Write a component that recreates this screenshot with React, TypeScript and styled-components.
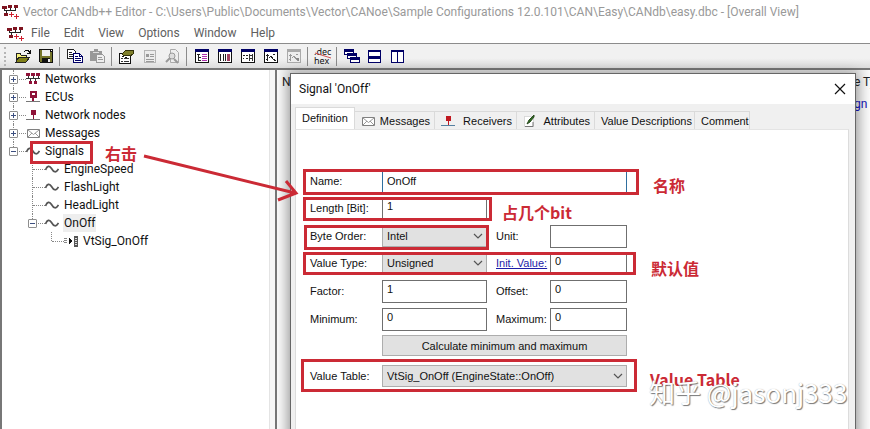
import React from "react";
import styled, { createGlobalStyle, css } from "styled-components";

const UI = `Roboto, "Noto Sans", sans-serif`;
const DLG = `"Liberation Sans", Arial, sans-serif`;
const CJK = `"Noto Sans CJK SC", sans-serif`;
const RED = "#cb2a35";

const GlobalStyle = createGlobalStyle`
  * { box-sizing: border-box; }
  html, body { margin: 0; padding: 0; }
  body { background: #fff; color: #111; font: 12px/18px ${UI}; overflow: hidden; }
  button, input, select { font: inherit; color: inherit; margin: 0; }
`;

const Shell = styled.div`
  position: relative;
  min-height: 100vh;
  display: flex;
  flex-direction: column;
  overflow: hidden;
`;

const TitleBar = styled.header`
  display: flex;
  align-items: center;
  gap: 4px;
  height: 23px;
  padding-left: 2px;
  color: #999;
  white-space: nowrap;
  flex: none;
`;

const MenuBar = styled.nav`
  display: flex;
  align-items: center;
  height: 20px;
  padding-left: 7px;
  color: #606060;
  flex: none;
`;

const MenuItem = styled.button`
  border: 0;
  background: none;
  padding: 0 7px;
`;

const Toolbar = styled.div`
  display: flex;
  align-items: center;
  height: 27px;
  padding-left: 11px;
  border-top: 1px solid #8c8c8c;
  border-bottom: 2px solid #777;
  background: linear-gradient(#f1f1f1 60%, #dcdcdc);
  flex: none;
  position: relative;
`;

const Grip = styled.i`
  position: absolute;
  left: 4px;
  top: 3px;
  bottom: 2px;
  border-left: 2px dotted #b5b5b5;
`;

const ToolButton = styled.button`
  width: 23px;
  height: 22px;
  padding: 0;
  border: 0;
  background: none;
  display: grid;
  place-items: center;
`;

const Separator = styled.i`
  width: 4px;
  height: 19px;
  border-left: 1px solid #8b8b8b;
  margin-left: 2px;
`;

const Workspace = styled.main`
  flex: 1;
  display: flex;
`;

const TreePane = styled.aside`
  width: 270px;
  border-left: 2px solid #777;
  border-right: 1px solid #e4e4e4;
  background: #fff;
`;

const Splitter = styled.div`
  width: 5px;
  background: #f7f7f7;
`;

const ListPane = styled.section`
  flex: 1;
  border-left: 2px solid #777;
  background: linear-gradient(90deg, #fafafa, #dedede 14px, #dedede calc(100% - 14px), #fafafa);
  display: flex;
  justify-content: space-between;
  align-items: flex-start;
  padding: 3px 0 0 5px;
  white-space: nowrap;
  overflow: hidden;
`;

const LastColumn = styled.div`
  width: 16px;
  display: flex;
  flex-direction: column;
  gap: 4px;
`;

const ColumnText = styled.span<{ $blue?: boolean }>`
  color: ${(p) => (p.$blue ? "#1414b4" : "#222")};
`;

const Tree = styled.ul`
  list-style: none;
  margin: 0;
  padding: 0 0 0 7px;
  position: relative;
`;

const SubTree = styled(Tree)`
  padding-left: 19px;
`;

const TreeRow = styled.div`
  display: flex;
  align-items: center;
  height: 18px;
`;

const Branch = styled.span<{ $last?: boolean }>`
  position: relative;
  width: 17px;
  height: 18px;
  flex: none;
  &::before {
    content: "";
    position: absolute;
    left: 4px;
    top: 0;
    height: ${(p) => (p.$last ? "9px" : "18px")};
    border-left: 1px dotted #888;
  }
  &::after {
    content: "";
    position: absolute;
    left: 5px;
    right: 0;
    top: 9px;
    border-top: 1px dotted #888;
  }
`;

const Expander = styled.button`
  position: absolute;
  z-index: 1;
  left: 0;
  top: 5px;
  width: 9px;
  height: 9px;
  padding: 0;
  border: 1px solid #8e8e8e;
  border-radius: 1px;
  background: #fff;
  svg { display: block; }
`;

const NodeLabel = styled.span<{ $selected?: boolean }>`
  padding: 0 1px;
  margin-left: 4px;
  background: ${(p) => (p.$selected ? "#eee" : "none")};
`;

const Dialog = styled.section`
  position: absolute;
  left: 290px;
  right: 14px;
  top: 73px;
  bottom: -12px;
  border: 1px solid #666;
  background: #f0f0f0;
  box-shadow: 0 1px 12px rgba(0, 0, 0, 0.35);
  display: flex;
  flex-direction: column;
  font-family: ${DLG};
  font-size: 11px;
  line-height: 14px;
  color: #111;
`;

const DialogTitle = styled.header`
  height: 30px;
  display: flex;
  align-items: center;
  justify-content: space-between;
  padding: 0 9px 0 8px;
  background: #fff;
  font: 12px/18px ${UI};
`;

const CloseButton = styled.button`
  width: 12px;
  height: 12px;
  padding: 0;
  border: 0;
  background: none;
  svg { display: block; }
`;

const Tabs = styled.div`
  display: flex;
  align-items: flex-end;
  height: 25px;
  padding-left: 4px;
`;

const Tab = styled.button<{ $active?: boolean; $width: number }>`
  width: ${(p) => p.$width}px;
  height: 18px;
  display: flex;
  align-items: center;
  justify-content: space-between;
  padding: 0 4px 0 6px;
  border: 1px solid #dadada;
  border-left: 0;
  border-bottom: 0;
  background: #f0f0f0;
  white-space: nowrap;
  ${(p) =>
    p.$active &&
    css`
      height: 22px;
      padding-bottom: 2px;
      background: #fff;
      border-left: 1px solid #dadada;
    `}
`;

const Page = styled.div`
  flex: 1;
  margin: 0 6px 0 4px;
  padding: 40px 15px 0 14px;
  background: #fff;
  border: 1px solid #dcdcdc;
  border-top-color: #e4e4e4;
`;

const Form = styled.form`
  display: grid;
  grid-template-columns: 72px 105px 63px 77px;
  grid-template-rows: 27px 28px 27px 28px 28px 27px 30px 21px;
  align-items: start;
`;

const Label = styled.label<{ $second?: boolean }>`
  line-height: 23px;
  white-space: nowrap;
  ${(p) => p.$second && "padding-left: 9px;"}
`;

const InitLink = styled.a`
  line-height: 23px;
  padding-left: 9px;
  color: #1c1ca8;
  white-space: nowrap;
`;

const Field = styled.input<{ $wide?: boolean; $blue?: boolean }>`
  width: 100%;
  height: 23px;
  padding: 0 4px 5px;
  border: 1px solid ${(p) => (p.$blue ? "#2f6f9f" : "#6f6f6f")};
  background: #fff;
  outline: 0;
  ${(p) => p.$wide && "grid-column: 2 / 5; padding-bottom: 1px;"}
`;

const SelectBox = styled.div<{ $wide?: boolean }>`
  position: relative;
  ${(p) => p.$wide && "grid-column: 2 / 5;"}
  svg { position: absolute; right: 4px; top: 8px; pointer-events: none; }
`;

const Select = styled.select`
  appearance: none;
  display: block;
  width: 100%;
  height: 22px;
  padding: 0 4px;
  border: 1px solid #adadad;
  border-radius: 0;
  background: #e1e1e1;
`;

const WideButton = styled.button`
  grid-column: 2 / 5;
  height: 21px;
  padding: 0;
  border: 1px solid #adadad;
  background: #e1e1e1;
`;

const Overlay = styled.div`
  position: absolute;
  inset: 0;
  overflow: hidden;
  pointer-events: none;
`;

const Frame = styled.i<{ $x: number; $y: number; $w: number; $h: number }>`
  position: absolute;
  left: ${(p) => p.$x}px;
  top: ${(p) => p.$y}px;
  width: ${(p) => p.$w}px;
  height: ${(p) => p.$h}px;
  border: 3px solid ${RED};
`;

const Note = styled.span<{ $x: number; $y: number }>`
  position: absolute;
  left: ${(p) => p.$x}px;
  top: ${(p) => p.$y}px;
  font: bold 16px/20px ${CJK};
  color: ${RED};
  white-space: nowrap;
`;

const Arrow = styled.svg`
  position: absolute;
  left: 140px;
  top: 150px;
`;

const Watermark = styled.span`
  position: absolute;
  left: 649px;
  top: 376px;
  font: 26px/32px "Noto Sans CJK SC", sans-serif;
  color: #fff;
  text-shadow: 1px 1px 1px #777, 0 0 1px #aaa;
  white-space: nowrap;
`;

const M = "#8e1238";
const N = "#000066";

const LogoIcon = () => (
  <svg width="17" height="15" viewBox="0 0 17 15" shapeRendering="crispEdges">
    <path d="M0 2h5v3H0zM6 1h4v3H6zM12 1h4v3h-4zM2 9h4v3H2z" fill="#7e1420" />
    <path d="M2.500 5v1.500h11V4M8.500 4v3M4.500 7v2" fill="none" stroke="#222" />
    <path d="M7 10.500h5M9.500 8v5M12 12.500h5M14.500 10v5" stroke="#d02030" fill="none" />
  </svg>
);

const OpenIcon = () => (
  <svg width="16" height="15" viewBox="0 0 16 15" shapeRendering="crispEdges">
    <path d="M1 13V4h4l1 2h5v3" fill="#f5f07a" stroke="#222" />
    <path d="M1 13l3-5h11l-4 5z" fill="#808018" stroke="#222" />
    <path d="M9 3l2-2h2l2 3M15 1v3h-3" fill="none" stroke="#111" />
  </svg>
);
const SaveIcon = () => (
  <svg width="14" height="14" viewBox="0 0 14 14" shapeRendering="crispEdges">
    <path d="M0 0h14v14H1L0 13z" fill="#111" />
    <path d="M1 1h2v12H1zM11 3h2v10h-2zM3 7h8v2H3z" fill="#75752a" />
    <path d="M3 1h8v6H3z" fill="#eee" />
    <path d="M9 10h2v3H9z" fill="#eee" />
    <path d="M12 1h1v1h-1z" fill="#fff" />
  </svg>
);
const CopyIcon = () => (
  <svg width="16" height="14" viewBox="0 0 16 14" shapeRendering="crispEdges">
    <path d="M.5.5h6l2 2v7h-8z" fill="#fff" stroke="#222" />
    <path d="M2 3h3M2 5h5M2 7h5" stroke="#222" />
    <path d="M6.500 4.500h6l3 3v6h-9z" fill="#fff" stroke={N} />
    <path d="M8 7.500h3M8 9.500h6M8 11.500h6" stroke={N} />
    <path d="M12.500 4v3.500H16" stroke={N} fill="none" />
  </svg>
);
const PasteIcon = () => (
  <svg width="16" height="14" viewBox="0 0 16 14" shapeRendering="crispEdges">
    <path d="M0 2h4V0h4v2h4v10H0z" fill="#999" />
    <path d="M3 3h6" stroke="#ddd" />
    <path d="M6.500 5.500h6l2 2v6h-8z" fill="#eee" stroke="#999" />
    <path d="M8 8.500h4M8 10.500h5" stroke="#999" />
  </svg>
);
const PropsIcon = () => (
  <svg width="15" height="15" viewBox="0 0 15 15" shapeRendering="crispEdges">
    <path d="M.5 4.500h11v10H.5z" fill="#fff" stroke="#111" />
    <path d="M2 9.500h2M5 9.500h5M2 12.500h2M5 12.500h5" stroke="#333" />
    <path d="M3 5l4-4h7v4l-3 2-3-1-3 1z" fill="#80802c" stroke="#33330a" />
    <path d="M3 7h2M6 8h2" stroke="#111" />
  </svg>
);
const GreyListIcon = () => (
  <svg width="12" height="13" viewBox="0 0 12 13" shapeRendering="crispEdges">
    <path d="M.5.5h11v12H.5z" fill="#ececec" stroke="#b5b5b5" />
    <path d="M2 4h3v3H2zM6 4h4v1H6zM6 6h4v1H6zM2 9h8v1H2zM2 11h8v1H2z" fill="#999" />
  </svg>
);
const GreyFindIcon = () => (
  <svg width="15" height="15" viewBox="0 0 15 15">
    <path d="M5.500.5h5l3 3v10h-8z" fill="#eee" stroke="#aaa" />
    <circle cx="7" cy="7" r="3" fill="#ddd" stroke="#999" />
    <path d="M5 9l-4 4M9 10l4 4" stroke="#999" strokeWidth="2" />
  </svg>
);
const WindowFrame = ({ grey, children }: { grey?: boolean; children: React.ReactNode }) => (
  <svg width="14" height="14" viewBox="0 0 14 14" shapeRendering="crispEdges">
    <path d="M.5.5h13v13H.5z" fill={grey ? "#eee" : "#fff"} stroke={grey ? "#aaa" : "#111"} />
    <path d="M0 0h14v3H0z" fill={grey ? "#aaa" : N} />
    {children}
  </svg>
);
const TreeWin = () => (
  <WindowFrame>
    <path d="M2 5.500h3M3.500 5v7M4 8.500h2M4 11.500h2" stroke="#222" fill="none" />
    <path d="M7 5.500h5M7 7.500h5M7 9.500h5M7 11.500h5" stroke="#b030b0" />
  </WindowFrame>
);
const ColumnsWin = () => (
  <WindowFrame>
    <path d="M2.500 5v7M5.500 5v7M7.500 5v7" stroke="#222" />
    <path d="M9 5h3v7H9z" fill="#a04060" />
  </WindowFrame>
);
const SplitWin = () => (
  <WindowFrame>
    <path d="M2 6.500h2M5 6.500h2M2 9.500h1M5 9.500h2" stroke="#222" />
    <path d="M8.500 5v7M11.500 5v7M9 6.500h3M9 9.500h3" stroke="#333" />
  </WindowFrame>
);
const GraphWin = ({ grey }: { grey?: boolean }) => (
  <WindowFrame grey={grey}>
    <path d="M3.500 5v7M2 6.500h3M2 10.500h2M5 9l2-2 2 3 3 2M9 6l2-1" stroke={grey ? "#999" : "#222"} fill="none" />
    {grey && <path d="M9 9h3v4z" fill="#888" />}
  </WindowFrame>
);
const HexIcon = () => (
  <svg width="20" height="18" viewBox="0 0 20 18">
    <text x="1" y="8" fontFamily="Noto Sans" fontSize="9" fill="#111">.dec</text>
    <text x="1" y="17" fontFamily="Noto Sans" fontSize="9" fill="#111">hex</text>
    <path d="M2 6l16 5" stroke="#d05050" />
  </svg>
);
const CascadeIcon = () => (
  <svg width="16" height="15" viewBox="0 0 16 15" shapeRendering="crispEdges">
    {[0, 1, 2].map((d) => (
      <g key={d}>
        <path d={`M${d * 3 + 0.5} ${d * 4 + 0.5}h9v5h-9z`} fill="#fff" stroke={N} />
        <path d={`M${d * 3} ${d * 4}h10v3h-10z`} fill={N} />
      </g>
    ))}
  </svg>
);
const TileRowsIcon = () => (
  <svg width="13" height="13" viewBox="0 0 13 13" shapeRendering="crispEdges">
    <path d="M.5.5h12v12H.5z" fill="#fff" stroke={N} />
    <path d="M0 0h13v2H0zM0 6h13v3H0z" fill={N} />
  </svg>
);
const TileColsIcon = () => (
  <svg width="13" height="13" viewBox="0 0 13 13" shapeRendering="crispEdges">
    <path d="M.5.5h12v12H.5zM6.500 0v13" fill="#fff" stroke={N} />
    <path d="M0 0h13v2H0z" fill={N} />
  </svg>
);

const NetworksIcon = () => (
  <svg width="14" height="14" viewBox="0 0 14 14" shapeRendering="crispEdges">
    <path d="M0 1h4v3H0zM5 1h4v3H5zM10 1h4v3h-4zM3 9h3v3H3zM8 9h3v3H8z" fill={M} />
    <path d="M2 4v2M7 4v2M12 4v2M0 6.500h14M4.500 7v2M9.500 7v2" stroke="#333" />
  </svg>
);
const EcuIcon = () => (
  <svg width="14" height="14" viewBox="0 0 14 14" shapeRendering="crispEdges">
    <path d="M4 1h7v7H4z" fill={M} />
    <path d="M6 3h3v2H6z" fill="#fff" />
    <path d="M7 8v3" stroke={M} strokeWidth="2" />
    <path d="M0 11.500h14" stroke="#777" />
  </svg>
);
const NodeIcon = ({ color = M, line = "#777" }: { color?: string; line?: string }) => (
  <svg width="14" height="14" viewBox="0 0 14 14" shapeRendering="crispEdges">
    <path d="M5 2h5v5H5zM7 7h1v4H7z" fill={color} />
    <path d="M0 11.500h14" stroke={line} />
  </svg>
);
const MailIcon = () => (
  <svg width="14" height="14" viewBox="0 0 14 14">
    <path d="M1.500 3.500h12v8h-12z" fill="#fff" stroke="#808080" />
    <path d="M2 4l5.500 4.500L13 4M2 11l4-4M13 11L9 7" fill="none" stroke="#999" />
  </svg>
);
const WaveIcon = () => (
  <svg width="14" height="14" viewBox="0 0 14 14">
    <path d="M0.500 8C2 4 4.500 3 6.500 6.500S11 11.500 13.500 7" fill="none" stroke="#555" strokeWidth="1.700" />
  </svg>
);
const ValueIcon = () => (
  <svg width="14" height="14" viewBox="0 0 14 14" shapeRendering="crispEdges">
    <path d="M0 4.500h3M0 6.500h3M0 8.500h3" stroke="#888" />
    <path d="M5 4l3 3-3 3z" fill="#111" />
    <path d="M10 2h4v11h-4z" fill="#555" />
    <path d="M11 4.500h2M11 6.500h2M11 8.500h2M11 10.500h2" stroke="#ddd" />
  </svg>
);
const NoteIcon = () => (
  <svg width="13" height="14" viewBox="0 0 13 14">
    <path d="M1.500 2.500h9v10h-9z" fill="#fff" stroke="#bbb" strokeDasharray="1 1" />
    <path d="M11 1L6 6 4 10l3-2 4-5z" fill="#2e6f22" stroke="#2b4a20" />
    <path d="M2 12.500h8V8" fill="none" stroke="#777" />
  </svg>
);
const Chevron = () => (
  <svg width="10" height="7" viewBox="0 0 10 7">
    <path d="M1 1l4 4 4-4" fill="none" stroke="#555" strokeWidth="1.200" />
  </svg>
);

type NodeProps = {
  icon: React.ReactNode;
  label: string;
  sign?: "+" | "-";
  last?: boolean;
  selected?: boolean;
  children?: React.ReactNode;
};

const TreeNode = ({ icon, label, sign, last, selected, children }: NodeProps) => (
  <li>
    <TreeRow>
      <Branch $last={last}>
        {sign && (
          <Expander aria-label={`Toggle ${label}`}>
            <svg width="7" height="7" viewBox="0 0 7 7" shapeRendering="crispEdges">
              <path d={sign === "+" ? "M1 3.500h5M3.500 1v5" : "M1 3.500h5"} stroke="#3c4f80" />
            </svg>
          </Expander>
        )}
      </Branch>
      {icon}
      <NodeLabel $selected={selected}>{label}</NodeLabel>
    </TreeRow>
    {children}
  </li>
);

type Tool = [string, React.ReactNode];
const toolGroups: Tool[][] = [
  [["Open", <OpenIcon />], ["Save", <SaveIcon />]],
  [["Copy", <CopyIcon />], ["Paste", <PasteIcon />]],
  [["Properties", <PropsIcon />], ["List", <GreyListIcon />], ["Find", <GreyFindIcon />]],
  [
    ["Overall view", <TreeWin />],
    ["Columns", <ColumnsWin />],
    ["Split view", <SplitWin />],
    ["Graph", <GraphWin />],
    ["Graph off", <GraphWin grey />],
  ],
  [["Decimal or hexadecimal", <HexIcon />]],
  [["Cascade", <CascadeIcon />], ["Tile rows", <TileRowsIcon />], ["Tile columns", <TileColsIcon />]],
];

const tabs: { label: string; width: number; icon?: React.ReactNode }[] = [
  { label: "Definition", width: 60 },
  { label: "Messages", width: 80, icon: <MailIcon /> },
  { label: "Receivers", width: 82, icon: <NodeIcon color="#c01820" line="#5580a0" /> },
  { label: "Attributes", width: 78, icon: <NoteIcon /> },
  { label: "Value Descriptions", width: 100 },
  { label: "Comment", width: 55 },
];

export default function App() {
  return (
    <Shell>
      <GlobalStyle />
      <TitleBar>
        <LogoIcon />
        Vector CANdb++ Editor - C:\Users\Public\Documents\Vector\CANoe\Sample Configurations 12.0.101\CAN\Easy\CANdb\easy.dbc - [Overall View]
      </TitleBar>
      <MenuBar>
        <LogoIcon />
        {["File", "Edit", "View", "Options", "Window", "Help"].map((m) => (
          <MenuItem key={m}>{m}</MenuItem>
        ))}
      </MenuBar>
      <Toolbar>
        <Grip />
        {toolGroups.map((group, i) => (
          <React.Fragment key={i}>
            {i > 0 && <Separator />}
            {group.map(([name, icon]) => (
              <ToolButton key={name} aria-label={name}>
                {icon}
              </ToolButton>
            ))}
          </React.Fragment>
        ))}
      </Toolbar>
      <Workspace>
        <TreePane>
          <Tree>
            <TreeNode sign="+" icon={<NetworksIcon />} label="Networks" />
            <TreeNode sign="+" icon={<EcuIcon />} label="ECUs" />
            <TreeNode sign="+" icon={<NodeIcon />} label="Network nodes" />
            <TreeNode sign="+" icon={<MailIcon />} label="Messages" />
            <TreeNode sign="-" last icon={<WaveIcon />} label="Signals">
              <SubTree>
                <TreeNode icon={<WaveIcon />} label="EngineSpeed" />
                <TreeNode icon={<WaveIcon />} label="FlashLight" />
                <TreeNode icon={<WaveIcon />} label="HeadLight" />
                <TreeNode sign="-" last selected icon={<WaveIcon />} label="OnOff">
                  <SubTree>
                    <TreeNode last icon={<ValueIcon />} label="VtSig_OnOff" />
                  </SubTree>
                </TreeNode>
              </SubTree>
            </TreeNode>
          </Tree>
        </TreePane>
        <Splitter />
        <ListPane>
          <ColumnText>N</ColumnText>
          <LastColumn>
            <ColumnText>e Ty</ColumnText>
            <ColumnText $blue>gn</ColumnText>
          </LastColumn>
        </ListPane>
      </Workspace>

      <Dialog role="dialog" aria-label="Signal 'OnOff'">
        <DialogTitle>
          Signal 'OnOff'
          <CloseButton aria-label="Close">
            <svg width="12" height="12" viewBox="0 0 12 12">
              <path d="M1 1l10 10M11 1L1 11" stroke="#111" strokeWidth="1.200" />
            </svg>
          </CloseButton>
        </DialogTitle>
        <Tabs role="tablist">
          {tabs.map((t, i) => (
            <Tab key={t.label} role="tab" $active={i === 0} $width={t.width}>
              {t.icon}
              {t.label}
            </Tab>
          ))}
        </Tabs>
        <Page>
          <Form>
            <Label htmlFor="name">Name:</Label>
            <Field id="name" $wide $blue defaultValue="OnOff" />
            <Label htmlFor="length">Length [Bit]:</Label>
            <Field id="length" defaultValue="1" />
            <span />
            <span />
            <Label htmlFor="order">Byte Order:</Label>
            <SelectBox>
              <Select id="order">
                <option>Intel</option>
              </Select>
              <Chevron />
            </SelectBox>
            <Label htmlFor="unit" $second>Unit:</Label>
            <Field id="unit" />
            <Label htmlFor="type">Value Type:</Label>
            <SelectBox>
              <Select id="type">
                <option>Unsigned</option>
              </Select>
              <Chevron />
            </SelectBox>
            <InitLink href="#init">Init. Value:</InitLink>
            <Field aria-label="Init. Value" defaultValue="0" />
            <Label htmlFor="factor">Factor:</Label>
            <Field id="factor" defaultValue="1" />
            <Label htmlFor="offset" $second>Offset:</Label>
            <Field id="offset" defaultValue="0" />
            <Label htmlFor="min">Minimum:</Label>
            <Field id="min" defaultValue="0" />
            <Label htmlFor="max" $second>Maximum:</Label>
            <Field id="max" defaultValue="0" />
            <span />
            <WideButton type="button">Calculate minimum and maximum</WideButton>
            <Label htmlFor="table">Value Table:</Label>
            <SelectBox $wide>
              <Select id="table">
                <option>VtSig_OnOff (EngineState::OnOff)</option>
              </Select>
              <Chevron />
            </SelectBox>
          </Form>
        </Page>
      </Dialog>

      <Overlay>
        <Frame $x={30} $y={141} $w={63} $h={23} />
        <Frame $x={303} $y={169} $w={336} $h={26} />
        <Frame $x={303} $y={197} $w={189} $h={24} />
        <Frame $x={304} $y={225} $w={185} $h={25} />
        <Frame $x={303} $y={252} $w={333} $h={23} />
        <Frame $x={301} $y={359} $w={336} $h={33} />
        <Note $x={105} $y={143}>右击</Note>
        <Note $x={653} $y={175}>名称</Note>
        <Note $x={502} $y={202}>占几个bit</Note>
        <Note $x={651} $y={258}>默认值</Note>
        <Note $x={650} $y={369}>Value Table</Note>
        <Arrow width="160" height="60" viewBox="0 0 160 60">
          <path d="M4 6L155 43M146 31l10 12-18 7" fill="none" stroke={RED} strokeWidth="3" />
        </Arrow>
        <Watermark>知乎 @jasonj333</Watermark>
      </Overlay>
    </Shell>
  );
}
